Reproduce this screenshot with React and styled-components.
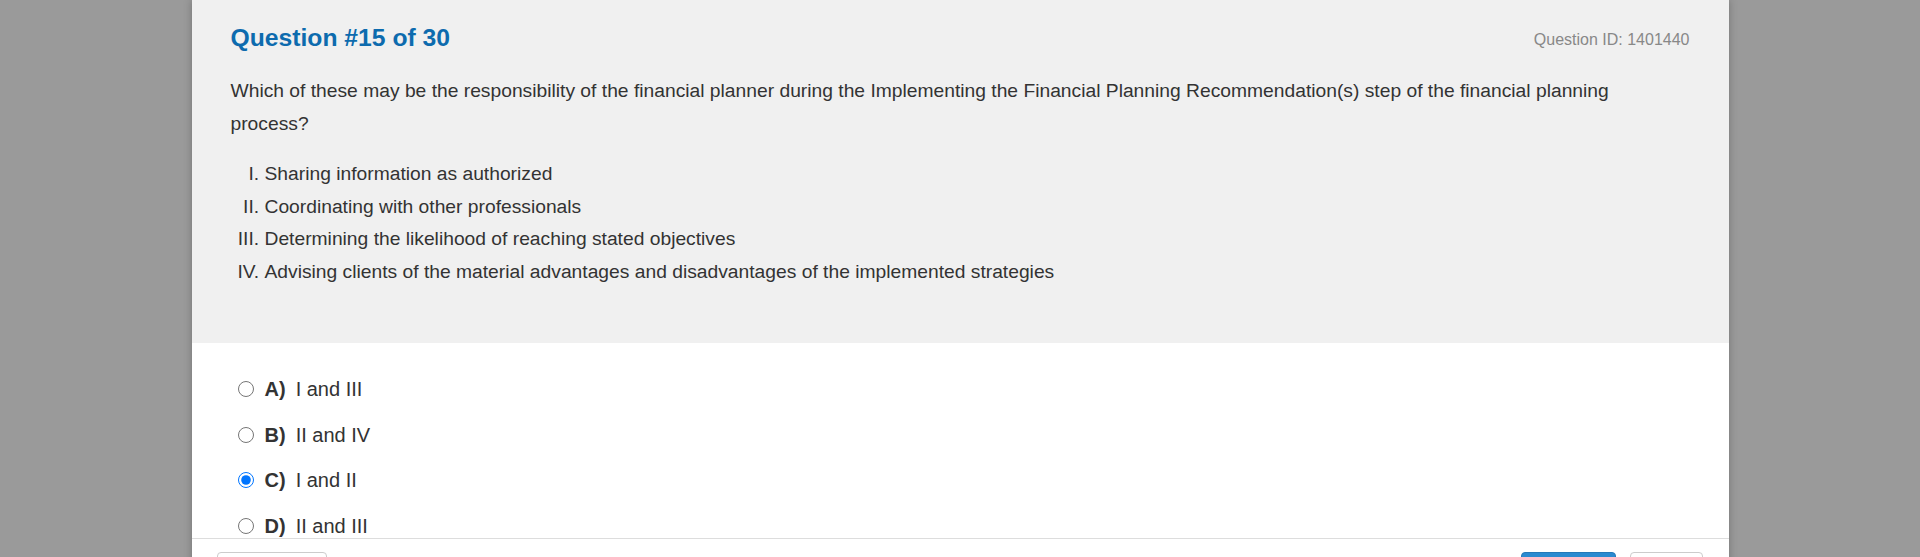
import React, { useState } from "react";
import styled, { createGlobalStyle } from "styled-components";

const GlobalStyle = createGlobalStyle`
  body {
    margin: 0;
    background: #9a9a9a;
    font-family: "Liberation Sans", Arial, sans-serif;
    color: #333333;
  }
`;

const items = [
  "Sharing information as authorized",
  "Coordinating with other professionals",
  "Determining the likelihood of reaching stated objectives",
  "Advising clients of the material advantages and disadvantages of the implemented strategies",
];

const answers = [
  { key: "A", text: "I and III" },
  { key: "B", text: "II and IV" },
  { key: "C", text: "I and II" },
  { key: "D", text: "II and III" },
];

const App = () => {
  const [selected, setSelected] = useState("C");

  return (
    <>
      <GlobalStyle />
      <StyledCard>
        <div className="stem">
          <div className="header">
            <h2 className="title">Question #15 of 30</h2>
            <span className="question-id">Question ID: 1401440</span>
          </div>
          <p className="question">
            Which of these may be the responsibility of the financial planner
            during the Implementing the Financial Planning Recommendation(s)
            step of the financial planning process?
          </p>
          <ol className="statements">
            {items.map((item) => (
              <li key={item}>{item}</li>
            ))}
          </ol>
        </div>

        <div className="answers">
          {answers.map((a) => (
            <label className="answer" key={a.key}>
              <input
                type="radio"
                name="answer"
                checked={selected === a.key}
                onChange={() => setSelected(a.key)}
              />
              <span className="letter">{a.key})</span>
              <span className="answer-text">{a.text}</span>
            </label>
          ))}
        </div>

        <div className="footer">
          <button className="button">Previous</button>
          <div className="footer-right">
            <button className="button primary-button">Submit</button>
            <button className="button">Next</button>
          </div>
        </div>
      </StyledCard>
    </>
  );
};

const StyledCard = styled.div`
  width: 1537px;
  margin: 0 auto;
  background: #ffffff;
  box-shadow: 0 0 8px rgba(0, 0, 0, 0.25);
  min-height: 700px;

  .stem {
    background: #f0f0f0;
    padding: 23px 39px 54px 39px;
  }

  .header {
    display: flex;
    justify-content: space-between;
    align-items: baseline;

    .title {
      margin: 0;
      font-size: 24.7px;
      line-height: 30px;
      font-weight: bold;
      color: #0d6bae;
    }

    .question-id {
      font-size: 16px;
      color: #888888;
      position: relative;
      top: -1px;
    }
  }

  .question {
    margin: 21px 0 0 0;
    font-size: 19.25px;
    line-height: 33px;
    padding-right: 40px;
  }

  .statements {
    list-style-type: upper-roman;
    margin: 18px 0 0 0;
    padding-left: 34px;
    font-size: 19.25px;
    line-height: 32.7px;
  }

  .answers {
    display: flex;
    flex-direction: column;
    gap: 21.7px;
    padding: 34px 0 0 46px;

    .answer {
      display: flex;
      align-items: center;
      height: 24px;
      font-size: 20px;
      line-height: 24px;
      cursor: pointer;

      input {
        width: 16px;
        height: 16px;
        margin: 0 11px 0 0;
      }

      .letter {
        font-weight: bold;
        margin-right: 10px;
      }
    }
  }

  .footer {
    display: flex;
    justify-content: space-between;
    border-top: 1px solid #dddddd;
    padding: 13px 26px 13px 25px;

    .footer-right {
      display: flex;
      gap: 14px;
    }

    .button {
      height: 34px;
      width: 110px;
      background: #ffffff;
      border: 1px solid #cccccc;
      border-radius: 4px;
      font-family: "Liberation Sans", Arial, sans-serif;
      font-size: 15px;
      color: #333333;
    }

    .footer-right .button {
      width: 73px;
    }

    .footer-right .primary-button {
      width: 95px;
      background: #2a8ad0;
      border-color: #2479b8;
      color: #ffffff;
    }
  }
`;

export default App;
